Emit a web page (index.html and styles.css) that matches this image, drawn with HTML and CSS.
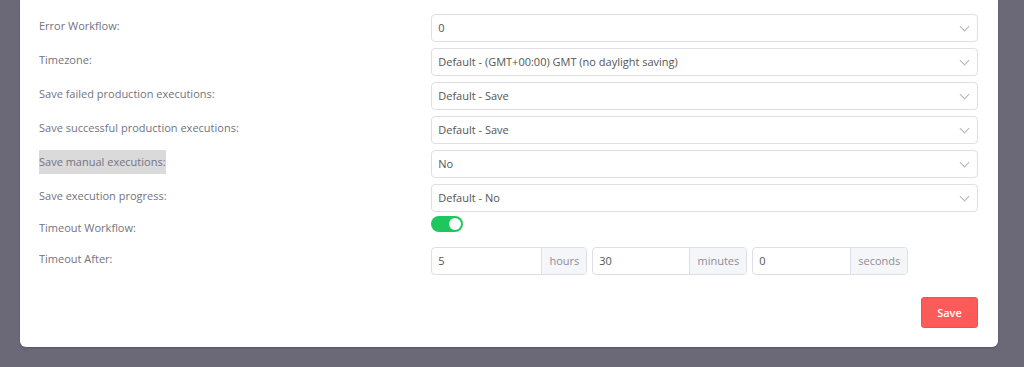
FILE: index.html
```html
<!DOCTYPE html>
<html lang="en">
<head>
  <meta charset="UTF-8">
  <meta name="viewport" content="width=device-width, initial-scale=1.0">
  <title>Workflow Settings</title>
  <link rel="stylesheet" href="styles.css">
</head>
<body>
  <div class="card">
    <div class="setting">
      <div class="label">Error Workflow:</div>
      <div class="value"><div class="select">0<span class="chevron"></span></div></div>
    </div>
    <div class="setting">
      <div class="label">Timezone:</div>
      <div class="value"><div class="select">Default - (GMT+00:00) GMT (no daylight saving)<span class="chevron"></span></div></div>
    </div>
    <div class="setting">
      <div class="label">Save failed production executions:</div>
      <div class="value"><div class="select">Default - Save<span class="chevron"></span></div></div>
    </div>
    <div class="setting">
      <div class="label">Save successful production executions:</div>
      <div class="value"><div class="select">Default - Save<span class="chevron"></span></div></div>
    </div>
    <div class="setting">
      <div class="label"><span class="selected">Save manual executions:</span></div>
      <div class="value"><div class="select">No<span class="chevron"></span></div></div>
    </div>
    <div class="setting">
      <div class="label">Save execution progress:</div>
      <div class="value"><div class="select">Default - No<span class="chevron"></span></div></div>
    </div>
    <div class="setting toggle-row">
      <div class="label">Timeout Workflow:</div>
      <div class="value"><span class="switch on"><span class="knob"></span></span></div>
    </div>
    <div class="setting">
      <div class="label">Timeout After:</div>
      <div class="value timeouts">
        <div class="input-group g1"><div class="input">5</div><div class="addon">hours</div></div>
        <div class="input-group g2"><div class="input">30</div><div class="addon">minutes</div></div>
        <div class="input-group g3"><div class="input">0</div><div class="addon">seconds</div></div>
      </div>
    </div>
    <div class="actions">
      <button class="btn-save">Save</button>
    </div>
  </div>
</body>
</html>
```

FILE: styles.css
```css
body { margin: 0; background: #6b6977; font-family: "Open Sans", Arial, sans-serif; font-size: 11px; }
.card { margin: 0 26px 20px 20px; background: #fff; border-radius: 0 0 6px 6px; padding: 11px 20px 19px 19px; box-shadow: 0 1px 2px rgba(0,0,0,0.2); }
.setting { display: grid; grid-template-columns: 10fr 14fr; align-items: center; padding: 3px 0; }
.label { color: #737380; line-height: 24px; padding-bottom: 4px; }
.selected { background: #dadada; display: inline-block; }
.value { margin-left: 1px; }
.select { position: relative; height: 26px; line-height: 26px; border: 1px solid #dcdfe6; border-radius: 4px; padding: 0 30px 0 6px; color: #555; }
.chevron { position: absolute; right: 9px; top: 8px; width: 6px; height: 6px; border-right: 1px solid #b4b4bc; border-bottom: 1px solid #b4b4bc; transform: rotate(45deg); }
.toggle-row { padding: 0; height: 29px; }
.toggle-row .label { margin-top: 0; }
.toggle-row .value { align-self: start; padding-top: 1px; }
.switch { display: inline-block; width: 32px; height: 16px; border-radius: 8px; background: #dcdfe6; position: relative; vertical-align: top; }
.switch.on { background: #1ec75d; }
.knob { position: absolute; top: 2px; right: 2px; width: 12px; height: 12px; border-radius: 50%; background: #fff; }
.timeouts { display: flex; }
.input-group { display: flex; height: 28px; border: 1px solid #dcdfe6; border-radius: 4px; box-sizing: border-box; overflow: hidden; }
.g1 { width: 156px; }
.g2 { width: 155px; margin-left: 5px; }
.g3 { width: 156px; margin-left: 5px; }
.input { flex: 1; padding: 0 6px; line-height: 26px; color: #555; }
.addon { background: #f5f6f9; border-left: 1px solid #dcdfe6; color: #8d8d96; padding: 0 7px; line-height: 26px; }
.actions { display: flex; justify-content: flex-end; margin-top: 19px; }
.btn-save { background: #ff5a5a; border: 1px solid #f25050; color: #fff; font-family: "Open Sans", Arial, sans-serif; font-size: 11px; font-weight: 600; width: 57px; height: 31px; border-radius: 3px; }
```
